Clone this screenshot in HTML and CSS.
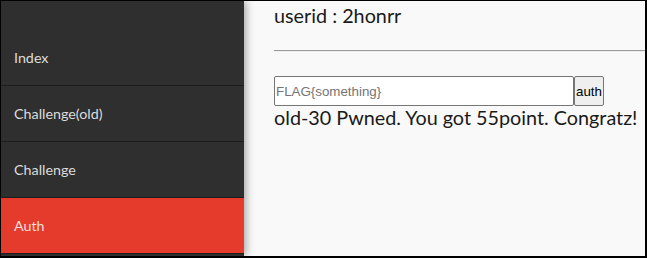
FILE: index.html
```html
<!DOCTYPE html>
<html>
<head>
<meta charset="utf-8">
<link rel="stylesheet" href="styles.css">
</head>
<body>
<div class="frame">
  <nav class="sidebar">
    <a class="item">Index</a>
    <a class="item">Challenge(old)</a>
    <a class="item">Challenge</a>
    <a class="item active">Auth</a>
    <a class="item"></a>
  </nav>
  <main class="main">
    <div class="userid">userid : 2honrr</div>
    <hr class="rule">
    <form class="auth-form">
      <input class="flag" type="text" placeholder="FLAG{something}"><button class="btn" type="button">auth</button>
    </form>
    <div class="msg">old-30 Pwned. You got 55point. Congratz!</div>
  </main>
</div>
</body>
</html>
```
FILE: styles.css
```css
html, body { margin: 0; padding: 0; }
body { background: #000; }
.frame {
  box-sizing: border-box;
  width: 647px;
  height: 258px;
  border-style: solid;
  border-color: #000;
  border-width: 1px 2px 2px 1px;
  display: flex;
  overflow: hidden;
  background: #f9f9f9;
}
.sidebar {
  width: 243px;
  flex: none;
  background: #2f2f2f;
  padding-top: 29px;
  display: flex;
  flex-direction: column;
  box-shadow: 2px 0 8px rgba(0,0,0,0.35);
  position: relative;
  z-index: 1;
}
.item {
  flex: none;
  height: 55px;
  border-bottom: 1px solid #1c1c1c;
  display: flex;
  align-items: center;
  padding-left: 13px;
  font-family: Lato, sans-serif;
  font-size: 14.3px;
  color: #dcdcdc;
}
.item.active { background: #e53b2c; color: #f2dede; }
.main {
  flex: 1;
  padding: 0 0 0 30px;
  font-family: Lato, sans-serif;
  color: #1a1a1a;
}
.userid {
  font-size: 19.8px;
  line-height: 24px;
  margin-top: 2px;
}
.rule {
  margin: 23px 0 0 0;
  border: 0;
  border-top: 1px solid #9a9a9a;
  border-bottom: 1px solid #eeeeee;
  height: 0;
}
.auth-form {
  margin: 24px 0 0 0;
  display: flex;
}
.flag {
  box-sizing: border-box;
  width: 300px;
  height: 30px;
  margin: 0;
  border: 1px solid #767676;
  border-radius: 2px;
  padding: 1px 1px;
  font-family: "Liberation Sans", Arial, sans-serif;
  font-size: 13.33px;
  background: #fff;
}
.flag::placeholder { color: #757575; }
.btn {
  box-sizing: border-box;
  height: 30px;
  width: 30px;
  margin: 0;
  padding: 0 1px;
  border: 1px solid #767676;
  border-radius: 2px;
  background: #efefef;
  font-family: "Liberation Sans", Arial, sans-serif;
  font-size: 13.33px;
  color: #000;
}
.msg {
  font-size: 19.8px;
  line-height: 24px;
  margin-top: -1px;
}
```
